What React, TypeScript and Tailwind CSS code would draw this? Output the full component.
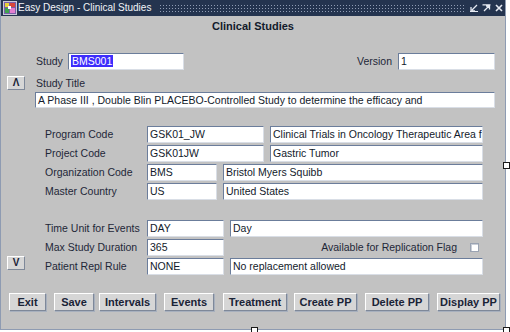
import React from "react";

type FieldProps = {
  value?: React.ReactNode;
  w: string;
  h?: string;
  className?: string;
};

// white text box with the sunken oracle-forms border
function Field({ value, w, h = "h-[17px]", className = "" }: FieldProps) {
  return (
    <div
      className={`${w} ${h} shrink-0 bg-white border border-t-[#6b7d9b] border-l-[#6b7d9b] border-r-[#d9dee6] border-b-[#d9dee6] px-[2px] text-[10.5px] leading-[15px] text-[#121a2b] whitespace-nowrap overflow-hidden ${className}`}>
      {value}
    </div>
  );
}

function FormButton({ label, className = "" }: { label: string; className?: string }) {
  return (
    <button
      type="button"
      className={`h-[18px] shrink-0 bg-[#d6d6d6] border border-t-white border-l-white border-r-[#7e8899] border-b-[#7e8899] shadow-[1px_1px_0_#a7b0be] text-[11px] font-bold text-[#1a2336] flex items-center justify-center ${className}`}>
      {label}
    </button>
  );
}

function NavButton({ label }: { label: string }) {
  return (
    <button
      type="button"
      className="w-[18px] h-[14px] shrink-0 bg-[#d6d6d6] border border-t-white border-l-white border-r-[#7e8899] border-b-[#7e8899] text-[10px] font-bold leading-none text-[#1a2336] flex items-center justify-center">
      {label}
    </button>
  );
}

function Label({ text, w = "w-[102px]" }: { text: string; w?: string }) {
  return (
    <div className={`${w} shrink-0 text-[10.5px] leading-[17px] text-[#1e2738] whitespace-nowrap`}>
      {text}
    </div>
  );
}

function AppIcon() {
  return (
    <svg width="14" height="14" viewBox="0 0 14 14" className="shrink-0">
      <rect x="0.5" y="0.5" width="13" height="13" fill="#7a5fa8" stroke="#c9c9d9" />
      <rect x="2" y="2" width="4" height="4" fill="#e8d23a" />
      <rect x="7" y="2" width="5" height="4" fill="#d9463b" />
      <rect x="2" y="7" width="4" height="5" fill="#3fa34d" />
      <rect x="7" y="7" width="5" height="5" fill="#e47fd0" />
      <rect x="5" y="5" width="3" height="3" fill="#ffffff" />
    </svg>
  );
}

function TitleControls() {
  return (
    <div className="flex items-center gap-[4px] text-[#e6eaf2]">
      <svg width="8" height="8" viewBox="0 0 8 8">
        <path d="M7 1 L2 6 M1 3 V7 H5" stroke="currentColor" strokeWidth="1.3" fill="none" />
        <path d="M0 7.5 H8" stroke="currentColor" strokeWidth="1" />
      </svg>
      <svg width="9" height="9" viewBox="0 0 9 9">
        <path d="M0.5 0.8 H8.5 M2 7 L7.5 1.5 M4 2 H7.5 V5.5" stroke="currentColor" strokeWidth="1.3" fill="none" />
      </svg>
      <svg width="8" height="8" viewBox="0 0 8 8">
        <path d="M1 1 L7 7 M7 1 L1 7" stroke="currentColor" strokeWidth="1.6" fill="none" />
      </svg>
    </div>
  );
}

const buttons = [
  { label: "Exit", cls: "ml-[8px] w-[37px]" },
  { label: "Save", cls: "ml-[8px] w-[40px]" },
  { label: "Intervals", cls: "ml-[5px] w-[57px]" },
  { label: "Events", cls: "ml-[8px] w-[50px]" },
  { label: "Treatment", cls: "ml-[9px] w-[64px]" },
  { label: "Create PP", cls: "ml-[7px] w-[63px]" },
  { label: "Delete PP", cls: "ml-[8px] w-[64px]" },
  { label: "Display PP", cls: "ml-[8px] w-[63px]" },
];

export default function App() {
  return (
    <div className="relative w-[510px] h-[332px] bg-white font-['Liberation_Sans',Arial,sans-serif] overflow-hidden">
      <div className="w-[506px] h-[330px] flex flex-col bg-[#c2c2c2] border-l border-r border-b border-[#8e9bb2]">
        {/* title bar */}
        <div className="h-[16px] shrink-0 bg-[#24344f] flex items-center pl-[2px] pr-[2px]">
          <AppIcon />
          <span className="ml-[1px] text-[10px] leading-none text-[#f2f4f8] whitespace-nowrap">
            Easy Design - Clinical Studies
          </span>
          <div className="ml-[8px] mr-[5px] flex-1 h-[9px] bg-[radial-gradient(circle,#8f9cb3_0.7px,transparent_0.9px)] bg-[length:3px_3px]" />
          <TitleControls />
        </div>

        <div className="mt-[3px] h-[14px] text-center text-[11px] font-bold leading-[14px] text-[#121a2b]">
          Clinical Studies
        </div>

        {/* study / version */}
        <div className="mt-[20px] flex items-center pl-[35px] pr-[10px]">
          <Label text="Study" w="w-[32px]" />
          <Field
            w="w-[116px]"
            value={<span className="bg-[#3d2dfc] text-white px-[1px]">BMS001</span>}
          />
          <div className="flex-1" />
          <Label text="Version" w="w-[41px]" />
          <Field w="w-[97px]" value="1" />
        </div>

        {/* study title */}
        <div className="mt-[6px] flex items-center pl-[6px]">
          <NavButton label="Λ" />
          <div className="ml-[11px] text-[10.5px] leading-[14px] text-[#1e2738]">Study Title</div>
        </div>
        <div className="mt-[2px] pl-[34px] pr-[10px]">
          <Field
            w="w-full"
            h="h-[16px]"
            value="A Phase III , Double Blin PLACEBO-Controlled Study to determine the efficacy and"
          />
        </div>

        {/* codes */}
        <div className="mt-[18px] flex flex-col gap-[2px] pl-[44px]">
          <div className="flex">
            <Label text="Program Code" />
            <Field w="w-[117px]" value="GSK01_JW" />
            <Field w="w-[213px]" className="ml-[6px]" value="Clinical Trials in Oncology Therapeutic Area f" />
          </div>
          <div className="flex">
            <Label text="Project Code" />
            <Field w="w-[117px]" value="GSK01JW" />
            <Field w="w-[213px]" className="ml-[6px]" value="Gastric Tumor" />
          </div>
          <div className="flex">
            <Label text="Organization Code" />
            <Field w="w-[70px]" value="BMS" />
            <Field w="w-[260px]" className="ml-[6px]" value="Bristol Myers Squibb" />
          </div>
          <div className="flex">
            <Label text="Master Country" />
            <Field w="w-[70px]" value="US" />
            <Field w="w-[260px]" className="ml-[6px]" value="United States" />
          </div>
        </div>

        {/* events */}
        <div className="mt-[20px] flex flex-col gap-[2px] pl-[6px]">
          <div className="flex">
            <div className="w-[38px] shrink-0" />
            <Label text="Time Unit for Events" />
            <Field w="w-[77px]" value="DAY" />
            <Field w="w-[253px]" className="ml-[6px]" value="Day" />
          </div>
          <div className="flex items-center">
            <div className="w-[38px] shrink-0" />
            <Label text="Max Study Duration" />
            <Field w="w-[77px]" value="365" />
            <div className="w-[233px] shrink-0 text-right text-[10.5px] leading-[17px] text-[#1e2738] whitespace-nowrap">
              Available for Replication Flag
            </div>
            <div className="ml-[13px] w-[9px] h-[9px] bg-white border border-[#9aa3b2] shadow-[inset_1px_1px_0_#c9ced7]" />
          </div>
          <div className="flex items-start">
            <div className="w-[38px] shrink-0 -mt-[2px]">
              <NavButton label="V" />
            </div>
            <Label text="Patient Repl Rule" />
            <Field w="w-[77px]" value="NONE" />
            <Field w="w-[253px]" className="ml-[6px]" value="No replacement allowed" />
          </div>
        </div>

        {/* action buttons */}
        <div className="mt-[18px] flex">
          {buttons.map((b) => (
            <FormButton key={b.label} label={b.label} className={b.cls} />
          ))}
        </div>
      </div>

      {/* resize handles */}
      <div className="absolute left-[503px] top-[162px] w-[7px] h-[7px] bg-white border border-[#1a1a1a]" />
      <div className="absolute left-[251px] top-[327px] w-[7px] h-[7px] bg-white border border-[#1a1a1a]" />
      <div className="absolute left-[503px] top-[327px] w-[7px] h-[7px] bg-white border border-[#1a1a1a]" />
    </div>
  );
}
